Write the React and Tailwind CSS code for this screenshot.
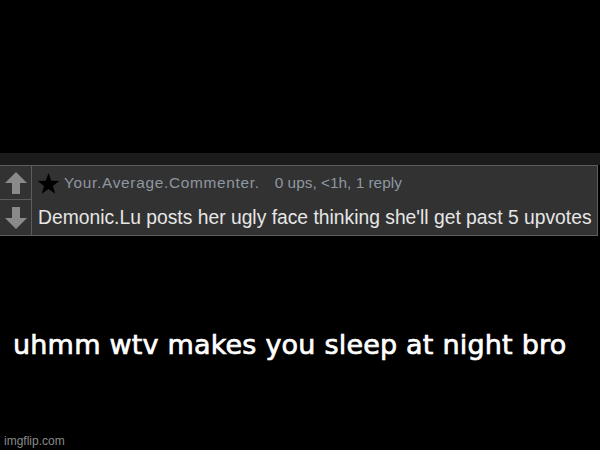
import React from 'react';

function Arrow({ down }) {
  return (
    <svg width="24" height="24" viewBox="0 0 24 24" className={down ? 'rotate-180' : ''}>
      <path d="M12 1 L23 12 L16 12 L16 23 L8 23 L8 12 L1 12 Z" fill="#8a8a8a" />
    </svg>
  );
}

export default function App() {
  return (
    <div className="w-[600px] h-[450px] bg-black flex flex-col relative overflow-hidden">
      <div className="h-[153px]" />
      <div className="h-[12px] bg-[#1b1b1b]" />
      <div className="flex w-[598px] h-[71px] bg-[#323232] border-y border-r border-[#5c5c5c]">
        <div className="w-[32px] flex flex-col border-r border-[#5c5c5c]">
          <div className="h-[34px] flex items-center justify-center border-b border-[#5c5c5c]">
            <Arrow />
          </div>
          <div className="flex-1 flex items-center justify-center">
            <Arrow down />
          </div>
        </div>
        <div className="flex-1 flex flex-col pl-[6px]" style={{ fontFamily: '"Liberation Sans", Arial, sans-serif' }}>
          <div className="h-[34px] flex items-center">
            <svg width="21" height="21" viewBox="1 1 22 22" className="mr-[5px]">
              <path d="M12 1 L14.9 9.2 L23.5 9.3 L16.6 14.5 L19.1 22.8 L12 17.8 L4.9 22.8 L7.4 14.5 L0.5 9.3 L9.1 9.2 Z" fill="#000" />
            </svg>
            <span className="text-[15.4px] tracking-[0.7px] text-[#8e97a0] leading-none">Your.Average.Commenter.</span>
            <span className="text-[15.4px] text-[#8e97a0] leading-none ml-[15px]">0 ups, &lt;1h, 1 reply</span>
          </div>
          <div className="flex-1 flex items-center">
            <span className="text-[19.3px] text-[#e6e6e6] leading-none">Demonic.Lu posts her ugly face thinking she'll get past 5 upvotes</span>
          </div>
        </div>
      </div>
      <div className="mt-[95px] pl-[13px] text-white text-[27px] leading-none tracking-[0.2px] [-webkit-text-stroke:0.7px_white]" style={{ fontFamily: '"Comic Sans MS", "DejaVu Sans", sans-serif' }}>
        uhmm wtv makes you sleep at night bro
      </div>
      <div className="absolute left-[4px] bottom-[3px] text-[12px] text-[#8a8a8a] leading-none" style={{ fontFamily: '"Liberation Sans", Arial, sans-serif' }}>
        imgflip.com
      </div>
    </div>
  );
}
